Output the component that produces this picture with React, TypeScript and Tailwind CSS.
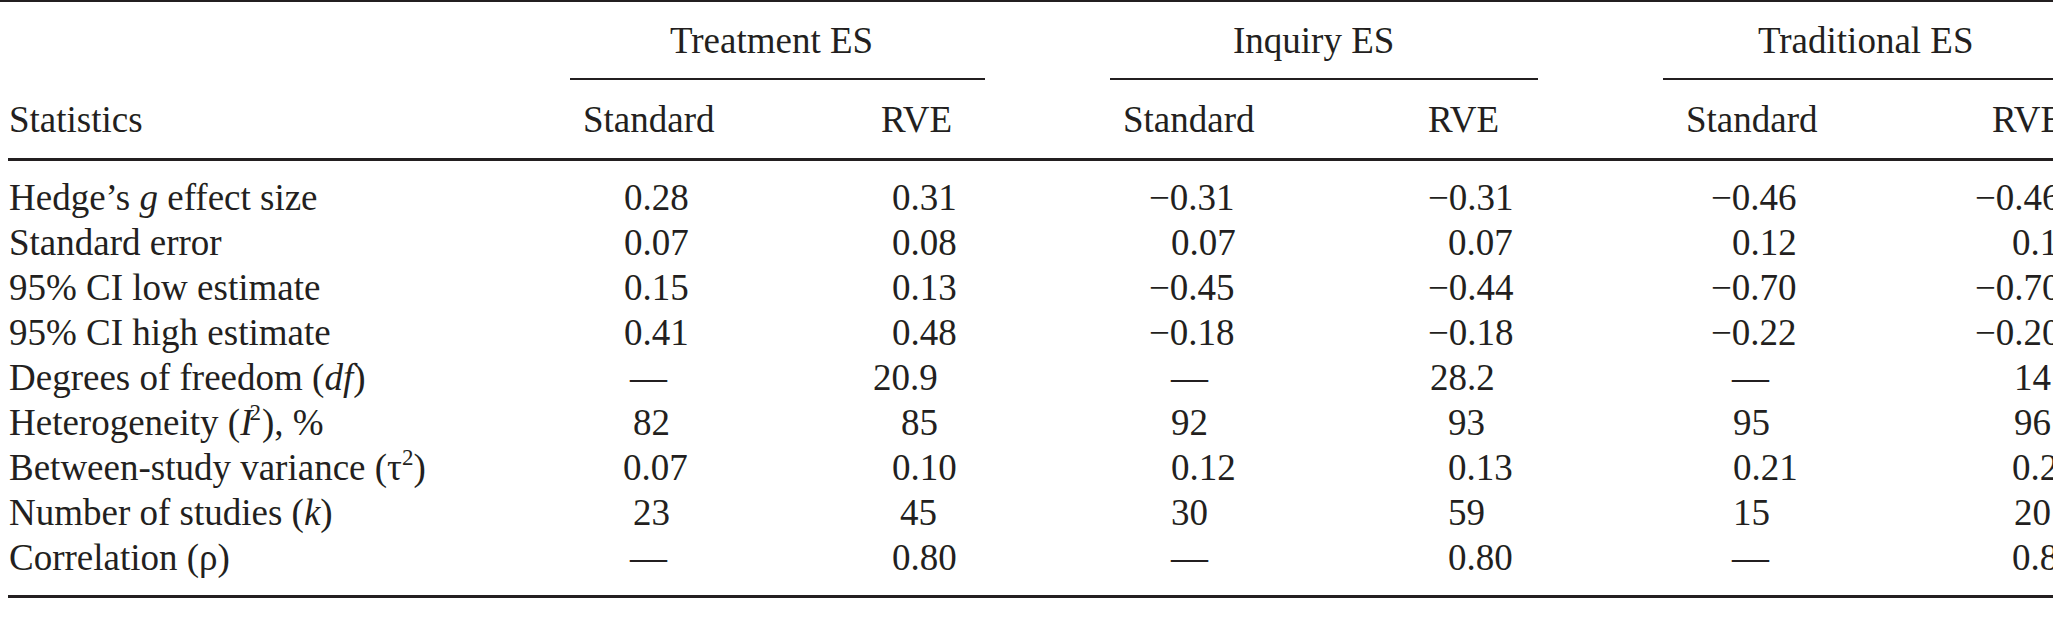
import React from "react";

type Cell = [React.ReactNode, string];

const widths = ["w-[290px]", "w-[250px]", "w-[300px]", "w-[253px]", "w-[293px]", "w-[150px]"];

const rows: { label: React.ReactNode; v: Cell[] }[] = [
  {
    label: (
      <>
        Hedge’s <i>g</i> effect size
      </>
    ),
    v: [
      ["0.28", "pl-[54px]"],
      ["0.31", "pl-[32px]"],
      ["−0.31", "pl-[39px]"],
      ["−0.31", "pl-[18px]"],
      ["−0.46", "pl-[48px]"],
      ["−0.46", "pl-[19px]"],
    ],
  },
  {
    label: "Standard error",
    v: [
      ["0.07", "pl-[54px]"],
      ["0.08", "pl-[32px]"],
      ["0.07", "pl-[61px]"],
      ["0.07", "pl-[38px]"],
      ["0.12", "pl-[69px]"],
      ["0.12", "pl-[56px]"],
    ],
  },
  {
    label: "95% CI low estimate",
    v: [
      ["0.15", "pl-[54px]"],
      ["0.13", "pl-[32px]"],
      ["−0.45", "pl-[39px]"],
      ["−0.44", "pl-[18px]"],
      ["−0.70", "pl-[48px]"],
      ["−0.70", "pl-[19px]"],
    ],
  },
  {
    label: "95% CI high estimate",
    v: [
      ["0.41", "pl-[54px]"],
      ["0.48", "pl-[32px]"],
      ["−0.18", "pl-[39px]"],
      ["−0.18", "pl-[18px]"],
      ["−0.22", "pl-[48px]"],
      ["−0.20", "pl-[19px]"],
    ],
  },
  {
    label: (
      <>
        Degrees of freedom (<i>df</i>)
      </>
    ),
    v: [
      ["—", "pl-[60px]"],
      ["20.9", "pl-[13px]"],
      ["—", "pl-[61px]"],
      ["28.2", "pl-[20px]"],
      ["—", "pl-[69px]"],
      ["14", "pl-[58px]"],
    ],
  },
  {
    label: (
      <>
        Heterogeneity (<i>I</i>
        <sup className="text-[23px] -top-[15px] -ml-[3px] mr-[1px]">2</sup>), %
      </>
    ),
    v: [
      ["82", "pl-[63px]"],
      ["85", "pl-[41px]"],
      ["92", "pl-[61px]"],
      ["93", "pl-[38px]"],
      ["95", "pl-[70px]"],
      ["96", "pl-[58px]"],
    ],
  },
  {
    label: (
      <>
        Between-study variance (τ<sup className="text-[23px] -top-[15px]">2</sup>)
      </>
    ),
    v: [
      ["0.07", "pl-[53px]"],
      ["0.10", "pl-[32px]"],
      ["0.12", "pl-[61px]"],
      ["0.13", "pl-[38px]"],
      ["0.21", "pl-[70px]"],
      ["0.22", "pl-[56px]"],
    ],
  },
  {
    label: (
      <>
        Number of studies (<i>k</i>)
      </>
    ),
    v: [
      ["23", "pl-[63px]"],
      ["45", "pl-[40px]"],
      ["30", "pl-[61px]"],
      ["59", "pl-[38px]"],
      ["15", "pl-[70px]"],
      ["20", "pl-[58px]"],
    ],
  },
  {
    label: "Correlation (ρ)",
    v: [
      ["—", "pl-[60px]"],
      ["0.80", "pl-[32px]"],
      ["—", "pl-[61px]"],
      ["0.80", "pl-[38px]"],
      ["—", "pl-[69px]"],
      ["0.80", "pl-[56px]"],
    ],
  },
];

const sub: Cell[] = [
  ["Standard", "pl-[13px]"],
  ["RVE", "pl-[21px]"],
  ["Standard", "pl-[13px]"],
  ["RVE", "pl-[18px]"],
  ["Standard", "pl-[23px]"],
  ["RVE", "pl-[36px]"],
];

export default function App() {
  return (
    <div className="w-[2053px] h-[636px] overflow-hidden bg-white text-[#231f20] font-['Liberation_Serif','Times_New_Roman',serif] text-[37px] leading-[45px]">
      <div className="w-[2100px]">
        <div className="h-[2px] bg-[#231f20]" />
        <div className="flex h-[76px] items-center">
          <div className="w-[570px] shrink-0" />
          <div className="w-[415px] shrink-0 pl-[100px] whitespace-nowrap">Treatment ES</div>
          <div className="w-[125px] shrink-0" />
          <div className="w-[428px] shrink-0 pl-[123px] whitespace-nowrap">Inquiry ES</div>
          <div className="w-[125px] shrink-0" />
          <div className="w-[428px] shrink-0 pl-[95px] whitespace-nowrap">Traditional ES</div>
        </div>
        <div className="flex h-[2px]">
          <div className="w-[570px] shrink-0" />
          <div className="w-[415px] shrink-0 bg-[#231f20]" />
          <div className="w-[125px] shrink-0" />
          <div className="w-[428px] shrink-0 bg-[#231f20]" />
          <div className="w-[125px] shrink-0" />
          <div className="w-[428px] shrink-0 bg-[#231f20]" />
        </div>
        <div className="flex h-[78px] items-center">
          <div className="w-[570px] shrink-0 pl-[9px]">Statistics</div>
          {sub.map(([t, pl], i) => (
            <div key={i} className={`${widths[i]} shrink-0 whitespace-nowrap ${pl}`}>
              {t}
            </div>
          ))}
        </div>
        <div className="ml-[8px] h-[3px] bg-[#231f20]" />
        <div className="pt-[14px] pb-[15px]">
          {rows.map((r, ri) => (
            <div key={ri} className="flex h-[45px] items-center">
              <div className="w-[570px] shrink-0 pl-[9px] whitespace-nowrap">{r.label}</div>
              {r.v.map(([t, pl], i) => (
                <div key={i} className={`${widths[i]} shrink-0 whitespace-nowrap ${pl}`}>
                  {t}
                </div>
              ))}
            </div>
          ))}
        </div>
        <div className="ml-[8px] h-[3px] bg-[#231f20]" />
      </div>
    </div>
  );
}
